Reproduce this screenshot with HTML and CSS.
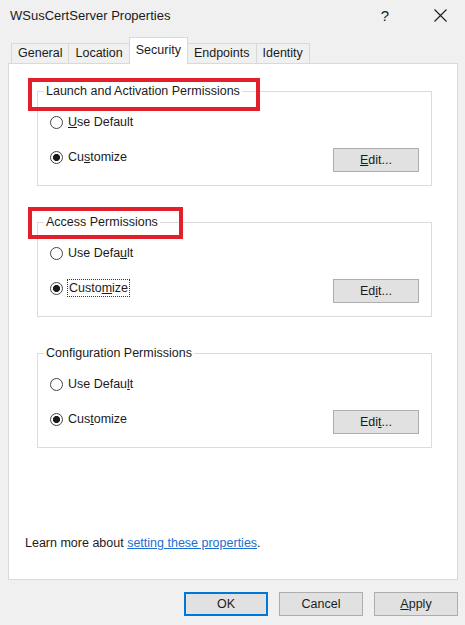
FILE: index.html
```html
<!DOCTYPE html>
<html lang="en">
<head>
  <meta charset="UTF-8">
  <title>WSusCertServer Properties</title>
  <link rel="stylesheet" href="styles.css">
</head>
<body>
  <div class="window">
    <div class="titlebar">
      <span class="title">WSusCertServer Properties</span>
      <span class="ctl help">?</span>
      <span class="ctl close">
        <svg width="13" height="13" viewBox="0 0 13 13"><path d="M0.5 0.5 L12.5 12.5 M12.5 0.5 L0.5 12.5" stroke="#1b1b1b" stroke-width="1.1" fill="none"/></svg>
      </span>
    </div>

    <div class="tabs">
      <div class="tab">General</div>
      <div class="tab">Location</div>
      <div class="tab active">Security</div>
      <div class="tab">Endpoints</div>
      <div class="tab">Identity</div>
    </div>

    <div class="panel">
      <!-- Launch -->
      <div class="group">
        <fieldset>
          <legend>Launch and Activation Permissions</legend>
          <div class="option"><span class="radio"></span><span><u>U</u>se Default</span></div>
          <div class="option-row">
            <div class="option"><span class="radio checked"></span><span>Cu<u>s</u>tomize</span></div>
            <button class="btn edit"><u>E</u>dit...</button>
          </div>
        </fieldset>
        <div class="callout callout-launch"></div>
      </div>

      <!-- Access -->
      <div class="group">
        <fieldset>
          <legend>Access Permissions</legend>
          <div class="option"><span class="radio"></span><span>Use Defa<u>u</u>lt</span></div>
          <div class="option-row">
            <div class="option"><span class="radio checked"></span><span class="focus">Custo<u>m</u>ize</span></div>
            <button class="btn edit">Ed<u>i</u>t...</button>
          </div>
        </fieldset>
        <div class="callout callout-access"></div>
      </div>

      <!-- Configuration -->
      <div class="group">
        <fieldset>
          <legend>Configuration Permissions</legend>
          <div class="option"><span class="radio"></span><span>Use Defau<u>l</u>t</span></div>
          <div class="option-row">
            <div class="option"><span class="radio checked"></span><span>Cus<u>t</u>omize</span></div>
            <button class="btn edit">Edi<u>t</u>...</button>
          </div>
        </fieldset>
      </div>

      <div class="learn">Learn more about <a href="#">setting these properties</a>.</div>
    </div>

    <div class="footer">
      <button class="btn default">OK</button>
      <button class="btn">Cancel</button>
      <button class="btn"><u>A</u>pply</button>
    </div>
  </div>
</body>
</html>
```

FILE: styles.css
```css
:root {
  --face: #f0f0f0;
  --line: #d9d9d9;
  --group: #dcdcdc;
  --text: #1b1b1b;
  --btn: #e1e1e1;
  --btn-border: #adadad;
  --accent: #0078d7;
  --mark: #e3202a;
}
* { box-sizing: border-box; }
body {
  margin: 0;
  font-family: 'Liberation Sans', Arial, sans-serif;
  font-size: 12.5px;
  color: var(--text);
  background: var(--face);
}
.window {
  width: 465px;
  height: 625px;
  background: var(--face);
  display: flex;
  flex-direction: column;
  overflow: hidden;
}
/* Title bar */
.titlebar {
  height: 30px;
  display: flex;
  align-items: center;
  padding-left: 10px;
  flex: none;
}
.title {
  font-size: 13px;
  flex: 1;
}
.ctl {
  display: flex;
  align-items: center;
  justify-content: center;
  height: 30px;
}
.help {
  width: 60px;
  font-size: 15px;
}
.close { width: 50px; }
/* Tabs */
.tabs {
  height: 33px;
  flex: none;
  display: flex;
  align-items: flex-end;
  padding-left: 11px;
  position: relative;
  z-index: 1;
}
.tab {
  height: 20px;
  line-height: 19px;
  padding: 0 6px;
  border: 1px solid var(--line);
  border-bottom: none;
  margin-right: -1px;
  background: var(--face);
}
.tab.active {
  height: 27px;
  line-height: 24px;
  background: #fff;
  margin-bottom: -1px;
  position: relative;
}
/* Panel */
.panel {
  height: 517px;
  flex: none;
  margin: 0 7px 0 8px;
  border: 1px solid var(--line);
  background: #fff;
  padding: 20px 16px 28px;
  display: flex;
  flex-direction: column;
}
.group {
  position: relative;
  margin: 0 9px 29px 12px;
}
fieldset {
  margin: 0;
  min-width: 0;
  border: 1px solid var(--group);
  padding: 0 12px 13px;
}
legend {
  line-height: 15px;
  padding: 0 2px;
  margin-left: -6px;
}
.option {
  display: flex;
  align-items: center;
  gap: 5px;
  height: 16px;
  line-height: 16px;
  margin-top: 15px;
}
.option-row {
  display: flex;
  justify-content: space-between;
  align-items: flex-start;
  margin-top: 18px;
}
.option-row .option { margin-top: 1px; }
.radio {
  width: 13px;
  height: 13px;
  border-radius: 50%;
  border: 1px solid #444;
  background: #fff;
  flex: none;
}
.radio.checked {
  background: radial-gradient(circle, #1b1b1b 0 3.3px, #fff 3.8px);
}
.focus {
  outline: 1px dotted #333;
  outline-offset: 0;
  padding: 0 1px;
}
.callout {
  position: absolute;
  border: 4px solid var(--mark);
  pointer-events: none;
}
.callout-launch {
  left: -9px;
  top: -6px;
  width: 232px;
  height: 33px;
}
.callout-access {
  left: -9px;
  top: -8px;
  width: 155px;
  height: 32px;
}
.learn {
  margin-top: auto;
  line-height: 16px;
}
.learn a {
  color: #1a6fd1;
  text-decoration: underline;
}
/* Buttons */
.btn {
  font-family: inherit;
  font-size: 12.5px;
  color: var(--text);
  background: var(--btn);
  border: 1px solid var(--btn-border);
  height: 24px;
  width: 84px;
  padding: 0;
  cursor: pointer;
}
.btn.edit { width: 86px; }
.btn.default {
  border-color: var(--accent);
  box-shadow: inset 0 0 0 1px var(--accent);
}
.footer {
  display: flex;
  justify-content: flex-end;
  gap: 11px;
  padding: 12px 7px 0 0;
}
```
